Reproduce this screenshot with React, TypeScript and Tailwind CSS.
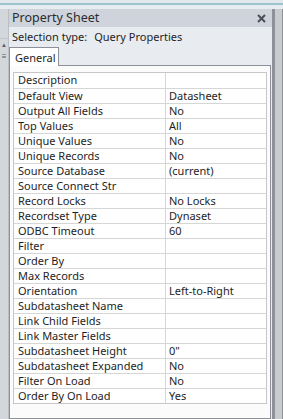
import React from "react";

const rows: [string, string][] = [
  ["Description", ""],
  ["Default View", "Datasheet"],
  ["Output All Fields", "No"],
  ["Top Values", "All"],
  ["Unique Values", "No"],
  ["Unique Records", "No"],
  ["Source Database", "(current)"],
  ["Source Connect Str", ""],
  ["Record Locks", "No Locks"],
  ["Recordset Type", "Dynaset"],
  ["ODBC Timeout", "60"],
  ["Filter", ""],
  ["Order By", ""],
  ["Max Records", ""],
  ["Orientation", "Left-to-Right"],
  ["Subdatasheet Name", ""],
  ["Link Child Fields", ""],
  ["Link Master Fields", ""],
  ["Subdatasheet Height", '0"'],
  ["Subdatasheet Expanded", "No"],
  ["Filter On Load", "No"],
  ["Order By On Load", "Yes"],
];

export default function App() {
  return (
    <div
      className="w-[283px] h-[419px] flex flex-col overflow-hidden bg-[#d5d9df] text-[#1e1e1e]"
      style={{ fontFamily: '"Noto Sans", "Open Sans", sans-serif' }}
    >
      {/* top strip */}
      <div className="h-[9px] flex flex-col bg-[#e2e7eb]">
        <div className="h-[3px]" />
        <div className="h-[2px] bg-[#9cc3cc]" />
        <div className="flex-1 bg-[#e6edf0]" />
      </div>

      <div className="flex flex-1 min-h-0">
        {/* left scroll strip */}
        <div className="w-[9px] bg-[#d3d6db] border-r border-[#b9bdc4] flex flex-col items-center">
          <div className="h-[29px]" />
          <div className="w-full h-[26px] border-t border-[#c2c6cc] flex flex-col items-center text-[#555a62]">
            <span className="text-[6px] leading-[12px]">▲</span>
            <span className="text-[8px] leading-[10px]">≡</span>
          </div>
        </div>

        {/* property sheet panel */}
        <div className="flex-1 flex flex-col bg-[#e8ebf0]">
          <div className="h-[18px] bg-[#cfd4dc] flex items-center justify-between pl-[3px] pr-[6px]">
            <span className="text-[12.5px] leading-[16px] text-[#2b2b2b]">Property Sheet</span>
            <svg width="9" height="9" viewBox="0 0 9 9">
              <path d="M1 1 L8 8 M8 1 L1 8" stroke="#4a4f57" strokeWidth="2" />
            </svg>
          </div>
          <div className="h-[19px] flex items-center pl-[3px] text-[11px] leading-[15px]">
            <span>Selection type:</span>
            <span className="ml-[7px]">Query Properties</span>
          </div>
          <div className="h-[19px] flex items-end">
            <div className="h-[19px] w-[50px] bg-white border border-b-0 border-[#8d9098] flex items-center pl-[5px] text-[11px] leading-[15px] relative top-[1px]">
              General
            </div>
          </div>
          <div className="flex-1 bg-[#fbfbfb] border border-[#8d9098] mr-[1px] pt-[6px] pl-[3px] pr-[3px]">
            <div className="border border-[#c6c6c6] bg-white">
              {rows.map(([label, value], i) => (
                <div
                  key={label}
                  className={`flex h-[15px] text-[11px] leading-[14px] ${i > 0 ? "border-t border-[#d6d6d6]" : ""}`}
                >
                  <div className="w-[152px] pl-[4px] border-r border-[#d6d6d6] whitespace-nowrap">
                    {label}
                  </div>
                  <div className="flex-1 pl-[3px] whitespace-nowrap">{value}</div>
                </div>
              ))}
            </div>
          </div>
        </div>

        {/* right border strip */}
        <div className="w-[11px] flex">
          <div className="w-[3px] bg-[#8e9197]" />
          <div className="flex-1 bg-[#c9cbce]" />
          <div className="w-[1px] bg-[#8e9197]" />
        </div>
      </div>
    </div>
  );
}
